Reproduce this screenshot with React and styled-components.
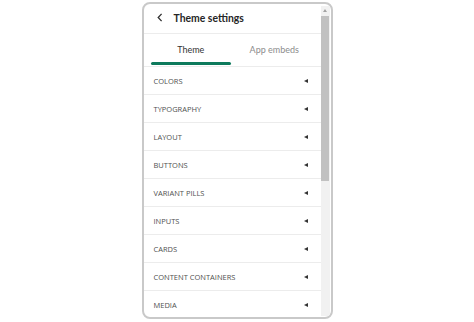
import React, { useState } from 'react';
import styled, { createGlobalStyle } from 'styled-components';

const GlobalStyle = createGlobalStyle`
  html, body {
    margin: 0;
    padding: 0;
    background: #fff;
  }
  body {
    font-family: Lato, "Open Sans", sans-serif;
  }
`;

const Page = styled.div`
  width: 474px;
  height: 322px;
  display: flex;
  justify-content: center;
  padding-top: 2px;
  box-sizing: border-box;
`;

const Panel = styled.div`
  width: 191px;
  height: 317px;
  box-sizing: border-box;
  border: 2px solid #c9c9c9;
  border-radius: 8px;
  background: #fff;
  display: flex;
  overflow: hidden;
`;

const Content = styled.div`
  flex: 1;
  display: flex;
  flex-direction: column;
  min-width: 0;
  overflow: hidden;
`;

const Header = styled.div`
  height: 30px;
  box-sizing: border-box;
  flex-shrink: 0;
  display: flex;
  align-items: center;
  padding: 0 0 2px 13px;
  gap: 10px;
  border-bottom: 1px solid #ececec;
`;

const BackButton = styled.button`
  border: none;
  background: none;
  padding: 0;
  width: 7px;
  height: 10px;
  display: flex;
  align-items: center;
  color: #303030;
  cursor: pointer;
`;

const Title = styled.h1`
  margin: 0;
  font-size: 10.4px;
  font-weight: 700;
  color: #262626;
`;

const Tabs = styled.div`
  height: 32px;
  flex-shrink: 0;
  display: flex;
  gap: 3px;
  padding: 0 6px 0 7px;
  border-bottom: 1px solid #ececec;
`;

const Tab = styled.button`
  flex: 1;
  border: none;
  background: none;
  padding: 0;
  position: relative;
  font-family: inherit;
  font-size: 9px;
  color: ${p => (p.$active ? '#333' : '#8c8c8c')};
  cursor: pointer;
  display: flex;
  align-items: center;
  justify-content: center;
  padding-bottom: 1px;

  &::after {
    content: '';
    position: absolute;
    left: 0;
    right: 0;
    bottom: 1px;
    height: 3px;
    border-radius: 2px;
    background: ${p => (p.$active ? '#0d7a5c' : 'transparent')};
  }
`;

const Row = styled.div`
  height: 27px;
  flex-shrink: 0;
  display: flex;
  align-items: center;
  justify-content: space-between;
  padding: 0 13px 0 10px;
  border-bottom: 1px solid #ececec;
  font-family: "Open Sans", sans-serif;
  font-size: 7.5px;
  color: #505050;
`;

const Caret = styled.span`
  width: 0;
  height: 0;
  border-top: 2.5px solid transparent;
  border-bottom: 2.5px solid transparent;
  border-right: 4px solid #333;
`;

const Scrollbar = styled.div`
  width: 9px;
  flex-shrink: 0;
  margin: 2px 1px 1px 0;
  background: #f1f1f1;
  display: flex;
  flex-direction: column;
  align-items: center;
`;

const ScrollArrow = styled.span`
  margin-top: 3px;
  width: 0;
  height: 0;
  border-left: 2.5px solid transparent;
  border-right: 2.5px solid transparent;
  border-bottom: 3px solid #a3a3a3;
`;

const Thumb = styled.div`
  margin-top: 4px;
  width: 8px;
  height: 165px;
  background: #c1c1c1;
`;

const sections = [
  'COLORS',
  'TYPOGRAPHY',
  'LAYOUT',
  'BUTTONS',
  'VARIANT PILLS',
  'INPUTS',
  'CARDS',
  'CONTENT CONTAINERS',
  'MEDIA',
];

export default function App() {
  const [tab, setTab] = useState('theme');

  return (
    <>
      <GlobalStyle />
      <Page>
        <Panel>
          <Content>
            <Header>
              <BackButton aria-label="Back">
                <svg width="6" height="9" viewBox="0 0 6 9">
                  <path d="M4.6 0.9 L1.2 4.5 L4.6 8.1" fill="none" stroke="currentColor" strokeWidth="1.3" />
                </svg>
              </BackButton>
              <Title>Theme settings</Title>
            </Header>
            <Tabs>
              <Tab $active={tab === 'theme'} onClick={() => setTab('theme')}>Theme</Tab>
              <Tab $active={tab === 'embeds'} onClick={() => setTab('embeds')}>App embeds</Tab>
            </Tabs>
            {sections.map(s => (
              <Row key={s}>
                {s}
                <Caret />
              </Row>
            ))}
          </Content>
          <Scrollbar>
            <ScrollArrow />
            <Thumb />
          </Scrollbar>
        </Panel>
      </Page>
    </>
  );
}
